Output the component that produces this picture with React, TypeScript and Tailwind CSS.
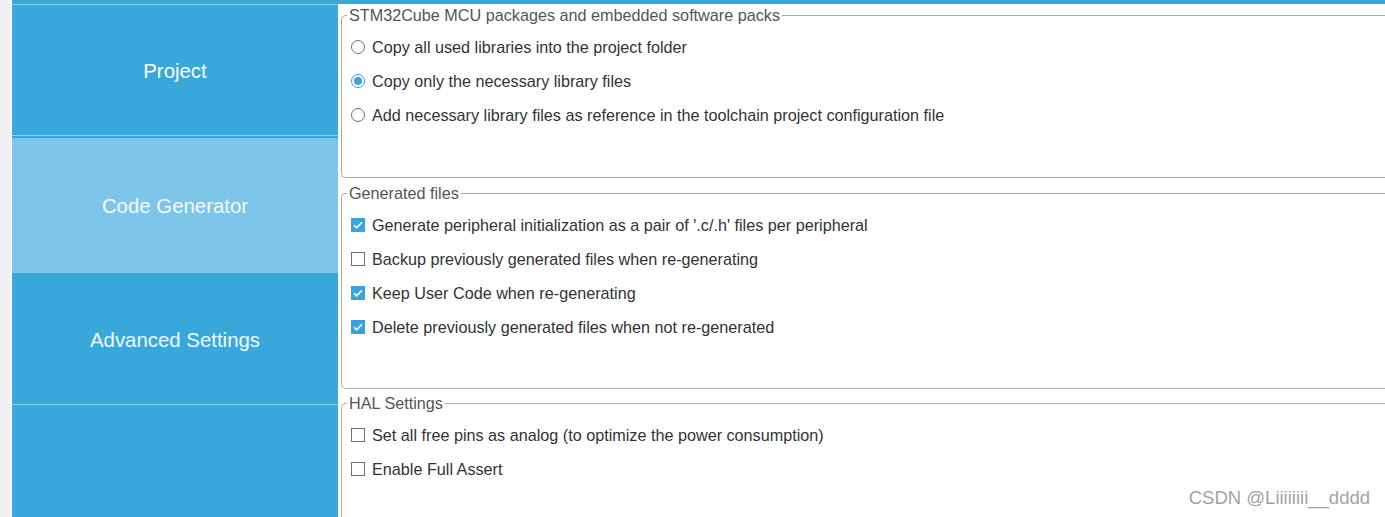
import React from 'react';

const font = { fontFamily: '"Liberation Sans", Arial, sans-serif' };

const Radio: React.FC<{ checked?: boolean; label: string }> = ({ checked, label }) => (
    <div className="flex items-center h-[34px] pl-[9px] gap-[7px]">
        {checked ? (
            <span className="w-[14px] h-[14px] rounded-full border border-[#3a9fd8] bg-white flex items-center justify-center">
                <span className="w-[8px] h-[8px] rounded-full bg-[#3ba3dc]" />
            </span>
        ) : (
            <span className="w-[14px] h-[14px] rounded-full border border-[#6e6e6e] bg-white" />
        )}
        <span className="text-[16.2px] text-[#333333] leading-none">{label}</span>
    </div>
);

const Check: React.FC<{ checked?: boolean; label: string }> = ({ checked, label }) => (
    <div className="flex items-center h-[34px] pl-[9px] gap-[7px]">
        {checked ? (
            <span className="w-[14px] h-[14px] bg-[#3ba3dc] flex items-center justify-center">
                <svg viewBox="0 0 14 14" className="w-[14px] h-[14px]">
                    <path d="M3 7.2l2.6 2.6L11 4.2" fill="none" stroke="#ffffff" strokeWidth="1.6" />
                </svg>
            </span>
        ) : (
            <span className="w-[14px] h-[14px] border border-[#6e6e6e] bg-white" />
        )}
        <span className="text-[16.2px] text-[#333333] leading-none">{label}</span>
    </div>
);

const Group: React.FC<{ title: string; className?: string; children: React.ReactNode }> = ({ title, className, children }) => (
    <fieldset className={`border border-r-0 border-[#ababab] rounded-l-[5px] ${className ?? ''}`}>
        <legend className="ml-[5px] px-[2px] text-[16.2px] leading-[18px] text-[#555555]">{title}</legend>
        {children}
    </fieldset>
);

const NavItem: React.FC<{ label: string; className: string }> = ({ label, className }) => (
    <div className={`flex items-center justify-center text-[20.4px] ${className}`}>{label}</div>
);

export default function App() {
    return (
        <div className="relative h-[517px] w-full flex overflow-hidden bg-white" style={font}>
            <div className="w-[12px] h-full bg-[#f0f0f0] border-r border-[#fafafa]" />
            <div className="flex-1 flex flex-col">
                <div className="h-[4px] bg-[#38a8db]" />
                <div className="flex-1 flex">
                    <div className="w-[326px] flex flex-col bg-[#38a8db] border-t border-[#86cdef]">
                        <NavItem label="Project" className="h-[131px] pt-[2px] border-b border-[#86cdef] text-white" />
                        <div className="h-[2px]" />
                        <NavItem label="Code Generator" className="h-[135px] pt-[1px] bg-[#7dc5e9] text-[#f4fafd]" />
                        <NavItem label="Advanced Settings" className="h-[132px] pt-[3px] border-b border-[#86cdef] text-[#eef8fd]" />
                        <div className="flex-1" />
                    </div>
                    <div className="flex-1 flex flex-col pl-[3px] pt-[2px]">
                        <Group title="STM32Cube MCU packages and embedded software packs" className="pt-[6px] pb-[45px]">
                            <Radio label="Copy all used libraries into the project folder" />
                            <Radio checked label="Copy only the necessary library files" />
                            <Radio label="Add necessary library files as reference in the toolchain project configuration file" />
                        </Group>
                        <Group title="Generated files" className="mt-[6px] pt-[6px] pb-[44px]">
                            <Check checked label="Generate peripheral initialization as a pair of '.c/.h' files per peripheral" />
                            <Check label="Backup previously generated files when re-generating" />
                            <Check checked label="Keep User Code when re-generating" />
                            <Check checked label="Delete previously generated files when not re-generated" />
                        </Group>
                        <Group title="HAL Settings" className="mt-[5px] pt-[6px] flex-1 border-b-0 rounded-bl-none">
                            <Check label="Set all free pins as analog (to optimize the power consumption)" />
                            <Check label="Enable Full Assert" />
                        </Group>
                    </div>
                </div>
            </div>
            <div className="absolute right-[15px] bottom-[8px] text-[18.5px] leading-[22px] text-[#a3a3a3]">CSDN @Liiiiiiii__dddd</div>
        </div>
    );
}
